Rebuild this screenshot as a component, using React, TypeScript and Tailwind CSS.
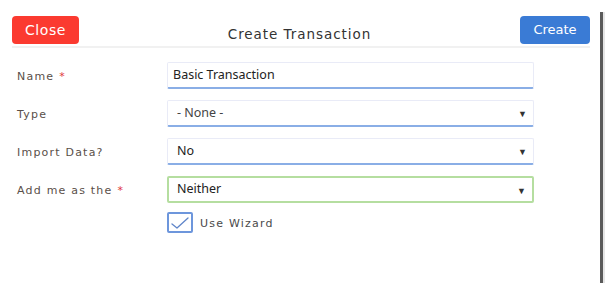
import React from 'react';

const labelCls =
  "w-[167px] shrink-0 pl-[17px] pt-[3px] text-[11px] tracking-[0.11em] text-[#5a4f49] font-['DejaVu_Sans',sans-serif]";

const Caret = () => (
  <span className="absolute right-[6px] top-1/2 -translate-y-1/2 text-[9px] leading-none text-[#333]">▼</span>
);

const Field: React.FC<{ label: string; required?: boolean; children: React.ReactNode }> = ({ label, required, children }) => (
  <div className="flex items-center h-[27px]">
    <div className={labelCls}>
      {label}
      {required && <span className="ml-[5px] text-[#e0343a]">*</span>}
    </div>
    {children}
  </div>
);

export default function App() {
  const inputBase =
    "relative w-[367px] h-[27px] flex items-center bg-white text-[12.5px] text-[#222] font-['Noto_Sans',sans-serif] rounded-[2px]";
  const blue = "border border-[#e9ebf7] border-b-2 border-b-[#8aaee6]";

  return (
    <div className="flex w-[605px] h-[283px] bg-white overflow-hidden">
      <div className="w-[600px] flex flex-col">
        <div className="mx-[12px] w-[578px] h-[48px] pt-[16px] border-b-2 border-[#f1f1f1] flex justify-between items-start">
          <button className="w-[67px] h-[28px] rounded-[4px] bg-[#fb3a30] text-white text-[14px] tracking-[0.04em] font-['DejaVu_Sans',sans-serif]">
            Close
          </button>
          <div className="mt-[8px] text-[13.5px] tracking-[0.07em] text-[#333] font-['DejaVu_Sans',sans-serif]">
            Create Transaction
          </div>
          <button className="w-[70px] h-[28px] rounded-[4px] bg-[#3a7bd5] text-white text-[13px] font-['DejaVu_Sans',sans-serif]">
            Create
          </button>
        </div>

        <div className="mt-[14px] flex flex-col gap-[11px]">
          <Field label="Name" required>
            <div className={`${inputBase} ${blue} pl-[5px]`}>Basic Transaction</div>
          </Field>
          <Field label="Type">
            <div className={`${inputBase} ${blue} pl-[9px] text-[#444]`}>
              - None -
              <Caret />
            </div>
          </Field>
          <Field label="Import Data?">
            <div className={`${inputBase} ${blue} pl-[9px]`}>
              No
              <Caret />
            </div>
          </Field>
          <Field label="Add me as the" required>
            <div className={`${inputBase} h-[25px] border-2 border-[#b5dea0] pl-[8px]`}>
              Neither
              <Caret />
            </div>
          </Field>
        </div>

        <div className="ml-[167px] mt-[9px] flex items-center gap-[7px]">
          <div className="w-[26px] h-[21px] border-2 border-[#6d96dc] rounded-[2px] flex items-center justify-center">
            <svg width="20" height="14" viewBox="0 0 20 14" fill="none">
              <path d="M2 8 L7 12 L18 2" stroke="#5f85c9" strokeWidth="1.3" strokeLinecap="round" strokeLinejoin="round" />
            </svg>
          </div>
          <span className="pt-[3px] text-[11px] tracking-[0.11em] text-[#4a4a4a] font-['DejaVu_Sans',sans-serif]">Use Wizard</span>
        </div>
      </div>
      <div className="w-[3px] mt-[12px] bg-[#5a5a5a]" />
      <div className="w-[2px] mt-[12px] bg-[#e5e5e5]" />
    </div>
  );
}
